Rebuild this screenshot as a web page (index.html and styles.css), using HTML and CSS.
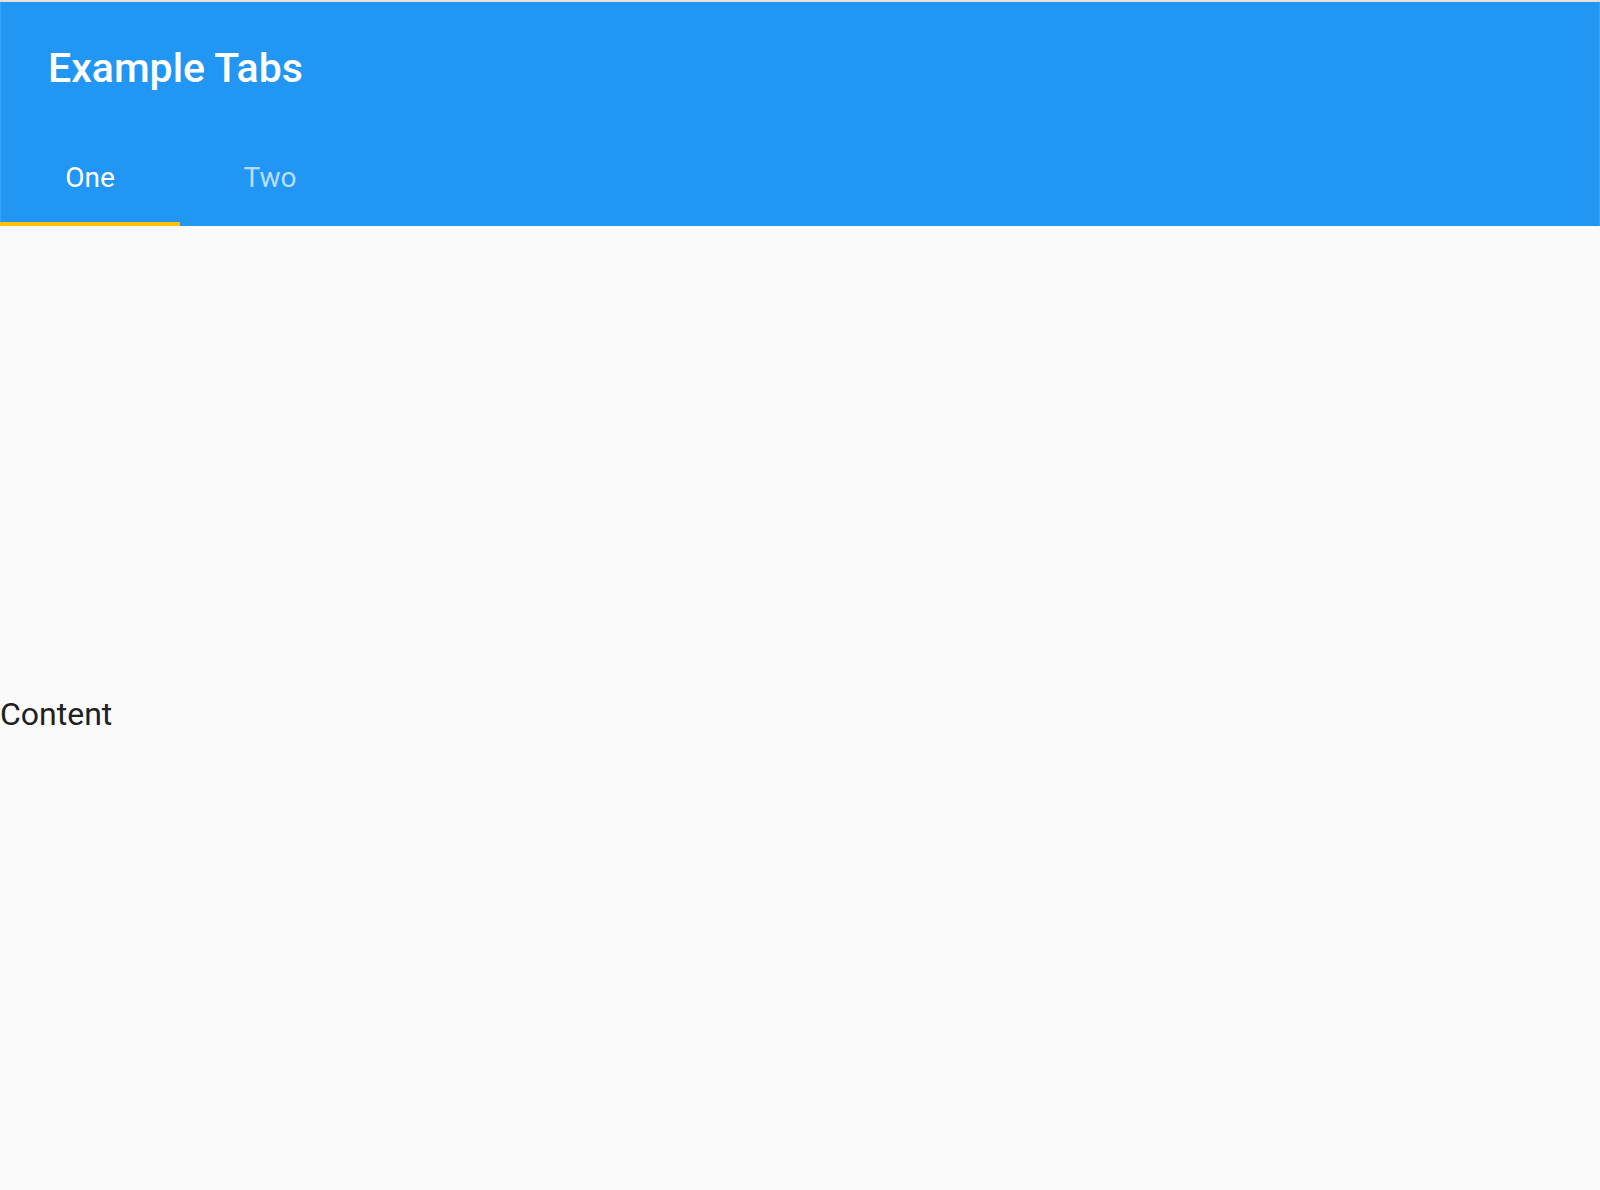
FILE: index.html
```html
<!DOCTYPE html>
<html>
<head>
<meta charset="utf-8">
<title>Example Tabs</title>
<link rel="stylesheet" href="styles.css">
</head>
<body>
<div class="app">
  <header class="appbar">
    <div class="toolbar">
      <h1 class="title">Example Tabs</h1>
    </div>
    <nav class="tabs">
      <div class="tab active">One</div>
      <div class="tab">Two</div>
    </nav>
  </header>
  <main class="content">
    <div class="content-text">Content</div>
  </main>
</div>
</body>
</html>
```
FILE: styles.css
```css
html, body {
  margin: 0;
  padding: 0;
  height: 100%;
}
body {
  background: #fafafa;
  font-family: Roboto, "Noto Sans", "Liberation Sans", sans-serif;
}
.app {
  display: flex;
  flex-direction: column;
  height: 100%;
  box-sizing: border-box;
  border-top: 2px solid #e2e2e2;
}
.appbar {
  background: #2196f3;
  color: #ffffff;
  flex: 0 0 auto;
  border-left: 1px solid #3aa2f4;
  border-right: 1px solid #3aa2f4;
}
.toolbar {
  height: 128px;
  display: flex;
  align-items: center;
  padding: 4px 47px 0;
  box-sizing: border-box;
}
.title {
  margin: 0;
  font-size: 41px;
  font-weight: 500;
  line-height: 1;
}
.tabs {
  display: flex;
  height: 96px;
  margin-left: -1px;
}
.tab {
  width: 180px;
  box-sizing: border-box;
  display: flex;
  align-items: center;
  justify-content: center;
  font-size: 28px;
  font-weight: 400;
  color: rgba(255, 255, 255, 0.7);
  border-bottom: 4px solid transparent;
  padding-top: 2px;
}
.tab.active {
  color: #ffffff;
  border-bottom-color: #ffc107;
}
.content {
  flex: 1 1 auto;
  display: flex;
  align-items: center;
  padding-top: 12px;
}
.content-text {
  font-size: 32px;
  color: #212121;
  line-height: 1.2;
}
```
